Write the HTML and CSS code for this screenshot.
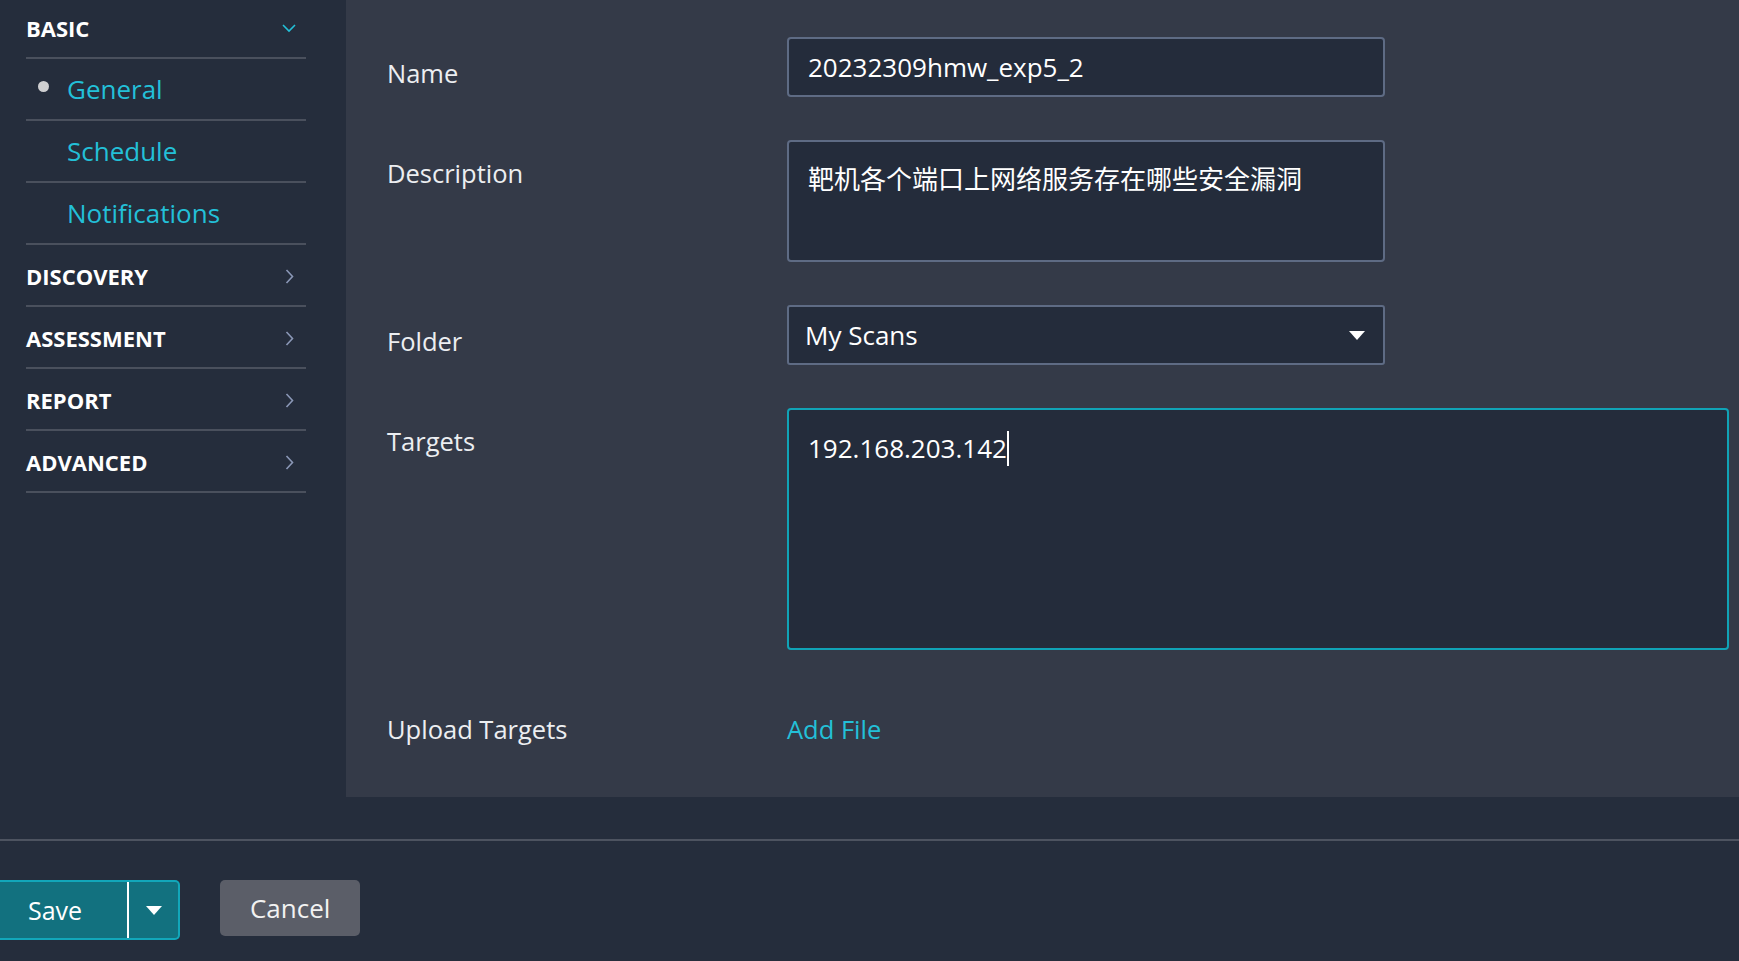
FILE: index.html
```html
<!DOCTYPE html>
<html lang="en">
<head>
    <meta charset="UTF-8">
    <meta name="viewport" content="width=device-width, initial-scale=1.0">
    <title>New Scan / Basic Network Scan</title>
    <link rel="stylesheet" href="styles.css">
</head>
<body>
    <div class="layout">
        <aside class="sidebar">
            <ul class="nav">
                <li class="nav-head">
                    <span>BASIC</span>
                    <svg class="chev-down" width="14" height="9" viewBox="0 0 14 9"><path d="M1 1l6 6 6-6" /></svg>
                </li>
                <li class="nav-item active"><span class="dot"></span>General</li>
                <li class="nav-item">Schedule</li>
                <li class="nav-item">Notifications</li>
                <li class="nav-head">
                    <span>DISCOVERY</span>
                    <svg class="chev-right" width="9" height="15" viewBox="0 0 9 15"><path d="M1.5 1l6 6.5-6 6.5" /></svg>
                </li>
                <li class="nav-head">
                    <span>ASSESSMENT</span>
                    <svg class="chev-right" width="9" height="15" viewBox="0 0 9 15"><path d="M1.5 1l6 6.5-6 6.5" /></svg>
                </li>
                <li class="nav-head">
                    <span>REPORT</span>
                    <svg class="chev-right" width="9" height="15" viewBox="0 0 9 15"><path d="M1.5 1l6 6.5-6 6.5" /></svg>
                </li>
                <li class="nav-head">
                    <span>ADVANCED</span>
                    <svg class="chev-right" width="9" height="15" viewBox="0 0 9 15"><path d="M1.5 1l6 6.5-6 6.5" /></svg>
                </li>
            </ul>
        </aside>

        <main class="panel">
            <div class="form-row">
                <div class="label single">Name</div>
                <div class="field input">20232309hmw_exp5_2</div>
            </div>
            <div class="form-row">
                <div class="label">Description</div>
                <div class="field textarea desc">靶机各个端口上网络服务存在哪些安全漏洞</div>
            </div>
            <div class="form-row">
                <div class="label single">Folder</div>
                <div class="field select">
                    <span>My Scans</span>
                    <svg width="16" height="9" viewBox="0 0 16 9"><path d="M0 0h16L8 9z" /></svg>
                </div>
            </div>
            <div class="form-row">
                <div class="label">Targets</div>
                <div class="field textarea targets">192.168.203.142<span class="caret"></span></div>
            </div>
            <div class="form-row">
                <div class="label single">Upload Targets</div>
                <div class="upload"><a href="#" class="link">Add File</a></div>
            </div>
        </main>
    </div>

    <div class="footer">
        <div class="save-group">
            <button class="save-button">Save</button>
            <button class="save-toggle">
                <svg width="16" height="9" viewBox="0 0 16 9"><path d="M0 0h16L8 9z" /></svg>
            </button>
        </div>
        <button class="cancel-button">Cancel</button>
    </div>
</body>
</html>
```

FILE: styles.css
```css
* {
    margin: 0;
    padding: 0;
    box-sizing: border-box;
    font-family: "Open Sans", "Noto Sans CJK SC", sans-serif;
}

body {
    background-color: #252d3c;
    color: #fff;
    width: 1739px;
    height: 961px;
    overflow: hidden;
}

.layout {
    display: flex;
    height: 797px;
}

/* sidebar */

.sidebar {
    width: 346px;
    padding: 0 40px 0 26px;
    overflow: hidden;
}

.nav {
    list-style: none;
    margin-top: -3px;
}

.nav li {
    height: 62px;
    border-bottom: 2px solid #4a505d;
    display: flex;
    align-items: center;
}

.nav-head {
    justify-content: space-between;
    padding-right: 10px;
    font-size: 22px;
    font-weight: bold;
    color: #fff;
}

.nav-head span {
    padding-top: 2px;
}

.nav-head svg {
    margin-top: 2px;
}

.nav-head svg path {
    fill: none;
    stroke-width: 1.6;
}

.chev-down path {
    stroke: #23c0d8;
}

.chev-right {
    margin-right: 2px;
}

.chev-right path {
    stroke: #8a97b6;
}

.nav-item {
    padding-left: 41px;
    font-size: 26px;
    color: #23c0d8;
}

.nav-item .dot {
    width: 11px;
    height: 11px;
    border-radius: 50%;
    background-color: #cfcfd1;
    margin-left: -29px;
    margin-right: 18px;
    margin-bottom: 6px;
}

/* form panel */

.panel {
    flex: 1;
    background-color: #343a48;
    padding: 37px 0 44px 41px;
    display: flex;
    flex-direction: column;
    gap: 43px;
}

.form-row {
    display: flex;
}

.label {
    width: 400px;
    flex-shrink: 0;
    font-size: 25.5px;
    line-height: 34px;
    color: #eceef1;
    padding-top: 16px;
}

.label.single {
    padding-top: 19px;
}

.field {
    width: 598px;
    background-color: #242c3b;
    border: 2px solid #5e6b84;
    border-radius: 4px;
    font-size: 26px;
    line-height: 36px;
    color: #fff;
}

.input {
    height: 60px;
    display: flex;
    align-items: center;
    padding-left: 19px;
}

.select {
    height: 60px;
    display: flex;
    align-items: center;
    justify-content: space-between;
    padding: 0 18px 0 16px;
    border-radius: 3px;
}

.select svg path,
.save-toggle svg path {
    fill: #fff;
}

.textarea {
    padding: 19px 19px;
}

.desc {
    height: 122px;
}

.targets {
    width: 942px;
    height: 242px;
    padding-top: 20px;
    border-color: #10a3b6;
}

.caret {
    display: inline-block;
    width: 2px;
    height: 35px;
    background-color: #fff;
    vertical-align: -8px;
}

.upload {
    height: 60px;
    padding-top: 19px;
}

.link {
    font-size: 25.5px;
    line-height: 34px;
    color: #23c0d8;
    text-decoration: none;
}

/* footer */

.footer {
    margin-top: 42px;
    border-top: 2px solid #4d5360;
    padding-top: 39px;
    display: flex;
    align-items: flex-start;
}

.save-group {
    display: flex;
    height: 60px;
    background-color: #12717f;
    border: 2px solid #12a7ba;
    border-left: none;
    border-radius: 0 5px 5px 0;
}

.save-group button {
    background: none;
    border: none;
    color: #fff;
    cursor: pointer;
}

.save-button {
    font-size: 25px;
    padding: 0 45px 0 28px;
    border-right: 2px solid #fff !important;
}

.save-toggle {
    width: 49px;
    display: flex;
    align-items: center;
    justify-content: center;
}

.cancel-button {
    margin-left: 40px;
    width: 140px;
    height: 56px;
    background-color: #5b5e68;
    border: none;
    border-radius: 5px;
    color: #f2f2f2;
    font-size: 26px;
    cursor: pointer;
}
```
